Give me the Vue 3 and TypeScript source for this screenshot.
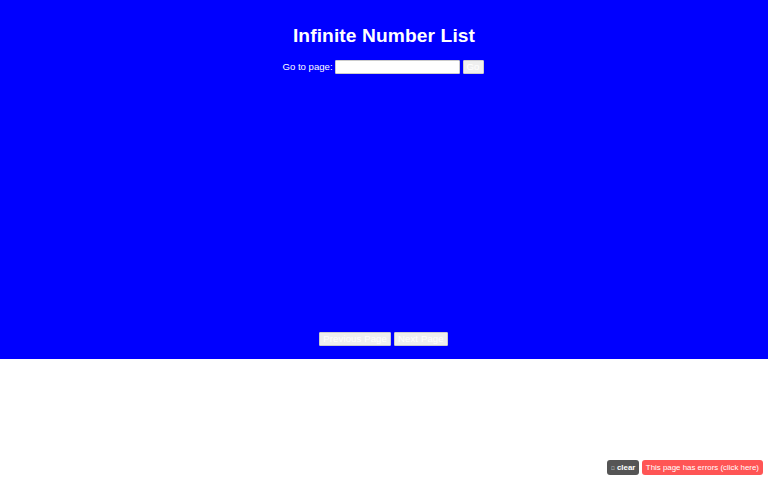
<script setup lang="ts">
const title: string = 'Infinite Number List'
</script>

<template>
  <div class="page">
    <h1 class="title">{{ title }}</h1>
    <div class="goto">
      <label class="goto-label" for="page-input">Go to page:</label>
      <input id="page-input" class="goto-input" type="text" />
      <button class="btn">Go</button>
    </div>
    <div class="pager">
      <button class="btn">Previous Page</button>
      <button class="btn">Next Page</button>
    </div>
  </div>
  <div class="errors">
    <button class="clear"><span class="glyph">&#xf1f8;</span> clear</button>
    <button class="err">This page has errors (click here)</button>
  </div>
</template>

<style>
body {
  margin: 0;
  background: #fff;
}
</style>

<style scoped>
.page {
  height: 359px;
  background: #0000ff;
  color: #fff;
  font-family: "Liberation Sans", Arial, sans-serif;
  font-size: 9.6px;
  display: flex;
  flex-direction: column;
  align-items: center;
}
.title {
  margin: 25px 0 0;
  font-size: 19.2px;
  line-height: 22px;
  font-weight: 700;
  letter-spacing: 0.1px;
}
.goto {
  margin: 13px 2px 0 0;
  display: flex;
  align-items: center;
  gap: 3px;
  height: 14px;
}
.goto-label {
  margin-right: -1px;
  padding-bottom: 2px;
}
.goto-input {
  width: 125px;
  height: 14px;
  box-sizing: border-box;
  border: 1px solid #ccc;
  border-radius: 1px;
  background: #fff;
  padding: 0;
}
.btn {
  height: 14px;
  box-sizing: border-box;
  padding: 0 3px;
  border: 1px solid #ccc;
  border-radius: 1px;
  background: #efefef;
  color: #fff;
  font-family: inherit;
  font-size: 9.6px;
  line-height: 12px;
  letter-spacing: 0.1px;
}
.pager {
  margin: auto 1px 13px 0;
  display: flex;
  gap: 3px;
}
.errors {
  position: fixed;
  right: 5px;
  bottom: 5px;
  display: flex;
  gap: 3px;
  font-family: "Liberation Sans", Arial, sans-serif;
}
.clear,
.err {
  height: 15px;
  border: 0;
  border-radius: 3px;
  padding: 0 4px;
  color: #fff;
  font-family: inherit;
  font-size: 7.9px;
  line-height: 15px;
}
.clear {
  background: #555;
  font-weight: 700;
  padding: 0 3.5px;
}
.glyph {
  font-size: 5px;
  font-weight: 400;
}
.err {
  background: #f55;
}
</style>
